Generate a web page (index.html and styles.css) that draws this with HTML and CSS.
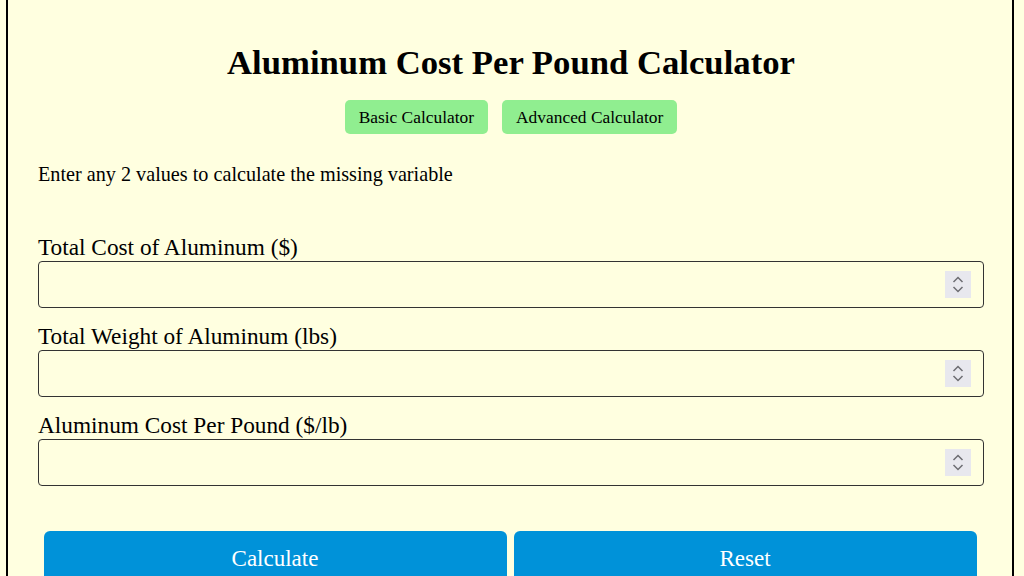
FILE: index.html
```html
<!DOCTYPE html>
<html>
<head>
<meta charset="utf-8">
<link rel="stylesheet" href="styles.css">
</head>
<body>
<div class="calc">
  <h1 class="title">Aluminum Cost Per Pound Calculator</h1>
  <div class="tabs">
    <button class="tab">Basic Calculator</button>
    <button class="tab">Advanced Calculator</button>
  </div>
  <p class="hint">Enter any 2 values to calculate the missing variable</p>
  <div class="field">
    <label class="label" for="cost">Total Cost of Aluminum ($)</label>
    <div class="box">
      <input class="input" id="cost" type="number">
      <span class="spin"><svg width="26" height="27" viewBox="0 0 26 27"><path d="M8.5 11 L13 6.5 L17.5 11 M8.5 16 L13 20.5 L17.5 16" fill="none" stroke="#6d6d72" stroke-width="1.5"/></svg></span>
    </div>
  </div>
  <div class="field">
    <label class="label" for="weight">Total Weight of Aluminum (lbs)</label>
    <div class="box">
      <input class="input" id="weight" type="number">
      <span class="spin"><svg width="26" height="27" viewBox="0 0 26 27"><path d="M8.5 11 L13 6.5 L17.5 11 M8.5 16 L13 20.5 L17.5 16" fill="none" stroke="#6d6d72" stroke-width="1.5"/></svg></span>
    </div>
  </div>
  <div class="field">
    <label class="label" for="cpp">Aluminum Cost Per Pound ($/lb)</label>
    <div class="box">
      <input class="input" id="cpp" type="number">
      <span class="spin"><svg width="26" height="27" viewBox="0 0 26 27"><path d="M8.5 11 L13 6.5 L17.5 11 M8.5 16 L13 20.5 L17.5 16" fill="none" stroke="#6d6d72" stroke-width="1.5"/></svg></span>
    </div>
  </div>
  <div class="actions">
    <button class="action">Calculate</button>
    <button class="action">Reset</button>
  </div>
</div>
</body>
</html>
```
FILE: styles.css
```css
html, body {
  margin: 0;
  padding: 0;
  background: #ffffe0;
  font-family: "Liberation Serif", "Times New Roman", serif;
  color: #000;
  overflow: hidden;
}
.calc {
  margin-left: 6px;
  border-left: 2px solid #000;
  border-right: 2px solid #000;
  padding: 44px 28px 0 30px;
  box-sizing: border-box;
  width: 1008px;
  min-height: 576px;
}
.title {
  margin: 0;
  font-size: 34.7px;
  font-weight: bold;
  text-align: center;
  line-height: 38px;
}
.tabs {
  display: flex;
  justify-content: center;
  gap: 14px;
  margin-top: 18px;
}
.tab {
  background: #90ee90;
  border: none;
  border-radius: 5px;
  font-family: inherit;
  font-size: 17.4px;
  color: #000;
  height: 34px;
  padding: 0 14px;
}
.hint {
  margin: 29px 0 0 0;
  font-size: 20.2px;
  line-height: 23px;
}
.field {
  display: flex;
  flex-direction: column;
  margin-top: 15px;
}
.hint + .field {
  margin-top: 48px;
}
.label {
  font-size: 23.3px;
  line-height: 27px;
}
.box {
  position: relative;
  width: 946px;
  height: 47px;
}
.input {
  box-sizing: border-box;
  width: 946px;
  height: 47px;
  margin: 0;
  border: 1px solid #333;
  border-radius: 4px;
  background: transparent;
  font-family: inherit;
  font-size: 20px;
  padding: 0 12px;
}
.input::-webkit-inner-spin-button,
.input::-webkit-outer-spin-button {
  -webkit-appearance: none;
  display: none;
  margin: 0;
}
.spin {
  position: absolute;
  top: 10px;
  right: 13px;
  width: 26px;
  height: 27px;
  background: #e8e8ee;
  display: block;
}
.spin svg {
  display: block;
}
.actions {
  display: flex;
  justify-content: center;
  gap: 7px;
  margin-top: 45px;
  margin-right: 2px;
}
.action {
  width: 463px;
  height: 56px;
  background: #0092d9;
  color: #fff;
  border: none;
  border-radius: 6px;
  font-family: inherit;
  font-size: 23px;
  padding: 0;
}
```
